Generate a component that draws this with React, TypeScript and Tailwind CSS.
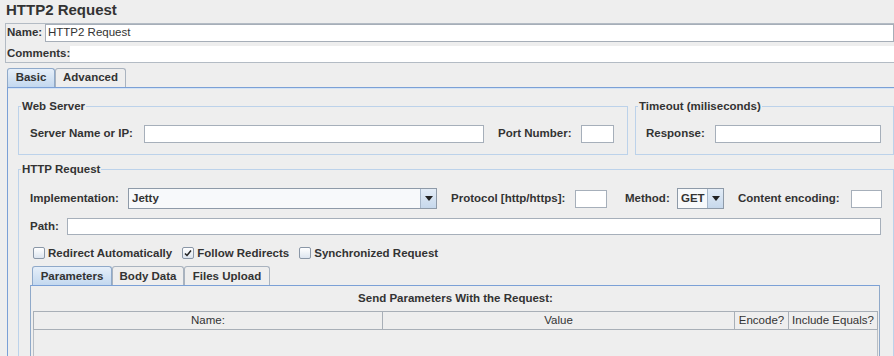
import React from "react";
import clsx from "clsx";

function Tab({ label, active, width }: { label: string; active?: boolean; width: string }) {
  return (
    <div
      className={clsx(
        "h-[19px] flex items-center justify-center font-bold border border-b-0 rounded-t-[3px] leading-none",
        width,
        active
          ? "bg-linear-to-b from-[#e6eff9] to-[#c3d8ef] border-[#8fa9c9]"
          : "bg-[#eeeeee] border-[#a9b3bf]"
      )}
    >
      {label}
    </div>
  );
}

function Field({ width, height = "h-[18px]" }: { width: string; height?: string }) {
  return <div className={clsx("shrink-0 bg-white border border-[#a6afba]", width, height)} />;
}

function Arrow() {
  return (
    <div className="w-[16px] h-full border-l border-[#a6b6c9] bg-linear-to-b from-[#e3ecf6] to-[#c6d8ec] flex items-center justify-center">
      <svg width="8" height="5" viewBox="0 0 8 5">
        <path d="M0 0 H8 L4 5 Z" fill="#222" />
      </svg>
    </div>
  );
}

function Combo({ value, width }: { value: string; width: string }) {
  return (
    <div className={clsx("shrink-0 h-[21px] flex border border-[#8e9aa8] bg-[#f7f9fb]", width)}>
      <div className="flex-1 pl-[3px] flex items-center font-bold">{value}</div>
      <Arrow />
    </div>
  );
}

function Check({ label, checked }: { label: string; checked?: boolean }) {
  return (
    <div className="flex items-center gap-[3px]">
      <div className="w-[12px] h-[12px] border border-[#8a97a7] rounded-[2px] bg-linear-to-b from-white to-[#dce5ef] flex items-center justify-center">
        {checked && (
          <svg width="8" height="8" viewBox="0 0 8 8">
            <path d="M1 4.5 L3 6.5 L7 1.5" stroke="#222" strokeWidth="1.5" fill="none" />
          </svg>
        )}
      </div>
      <span className="font-bold whitespace-nowrap">{label}</span>
    </div>
  );
}

function Group({ title, className, children }: { title: string; className?: string; children: React.ReactNode }) {
  return (
    <fieldset className={clsx("border border-[#bcd2ea] m-0 p-0", className)}>
      <legend className="ml-[2px] px-[1px] font-bold leading-[14px]">{title}</legend>
      {children}
    </fieldset>
  );
}

function Label({ text, width, className }: { text: string; width: string; className?: string }) {
  return <span className={clsx("shrink-0 font-bold whitespace-nowrap", width, className)}>{text}</span>;
}

export default function App() {
  return (
    <div className="w-[894px] h-[356px] overflow-hidden bg-[#eeeeee] text-[#333] text-[11.5px] font-['Liberation_Sans',Arial,sans-serif]">
      <div className="h-[23px] pl-[6px] text-[15px] font-bold leading-[20px]">HTTP2 Request</div>

      <div className="ml-[5px] border-y border-l border-[#b3bbc4] flex flex-col">
        <div className="h-[18px] flex items-center">
          <Label text="Name:" width="w-[39px]" className="pl-[1px]" />
          <div className="flex-1 h-[18px] bg-white border border-[#a6aeb8] pl-[2px] flex items-center">HTTP2 Request</div>
        </div>
        <div className="h-[16px] mt-[4px] flex items-center">
          <Label text="Comments:" width="w-[64px]" className="pl-[1px]" />
          <div className="flex-1 h-full bg-white" />
        </div>
      </div>

      <div className="mt-[5px] pl-[7px] flex">
        <Tab label="Basic" active width="w-[48px]" />
        <Tab label="Advanced" width="w-[71px]" />
      </div>

      <div className="ml-[7px] border-l border-t border-[#7ba0d6] h-[400px]">
        <div className="border-t border-[#d4e3f4] pt-[10px] pl-[10px]">
          <div className="flex gap-[7px]">
            <Group title="Web Server" className="w-[610px]">
              <div className="pt-[12px] pb-[11px] pl-[11px] flex items-center">
                <Label text="Server Name or IP:" width="w-[114px]" />
                <Field width="w-[340px]" />
                <Label text="Port Number:" width="w-[83px]" className="ml-[14px]" />
                <Field width="w-[33px]" />
              </div>
            </Group>
            <Group title="Timeout (miliseconds)" className="w-[259px]">
              <div className="pt-[12px] pb-[11px] pl-[10px] flex items-center">
                <Label text="Response:" width="w-[69px]" />
                <Field width="w-[166px]" />
              </div>
            </Group>
          </div>

          <Group title="HTTP Request" className="mt-[7px] w-[876px] h-[260px]">
            <div className="pt-[12px] pl-[11px]">
              <div className="flex items-center">
                <Label text="Implementation:" width="w-[98px]" />
                <Combo value="Jetty" width="w-[309px]" />
                <Label text="Protocol [http/https]:" width="w-[124px]" className="ml-[14px]" />
                <Field width="w-[32px]" />
                <Label text="Method:" width="w-[52px]" className="ml-[18px]" />
                <Combo value="GET" width="w-[47px]" />
                <Label text="Content encoding:" width="w-[113px]" className="ml-[14px]" />
                <Field width="w-[31px]" />
              </div>

              <div className="mt-[9px] flex items-center">
                <Label text="Path:" width="w-[37px]" />
                <Field width="w-[814px]" height="h-[17px]" />
              </div>

              <div className="mt-[10px] h-[16px] pl-[3px] flex items-center gap-[10px]">
                <Check label="Redirect Automatically" />
                <Check label="Follow Redirects" checked />
                <Check label="Synchronized Request" />
              </div>

              <div className="mt-[5px] pl-[2px] flex">
                <Tab label="Parameters" active width="w-[80px]" />
                <Tab label="Body Data" width="w-[72px]" />
                <Tab label="Files Upload" width="w-[86px]" />
              </div>
              <div className="w-[850px] h-[100px] border border-[#8fa9c9] border-t-[#7ba0d6] pl-[2px] pr-[1px]">
                <div className="h-[25px] flex items-center justify-center font-bold">Send Parameters With the Request:</div>
                <div className="flex h-[19px] text-[#333]">
                  <div className="w-[350px] border border-[#a8afb7] flex items-center justify-center">Name:</div>
                  <div className="w-[352px] border-y border-r border-[#a8afb7] flex items-center justify-center">Value</div>
                  <div className="w-[54px] border-y border-r border-[#a8afb7] flex items-center justify-center">Encode?</div>
                  <div className="w-[89px] border-y border-r border-[#a8afb7] flex items-center justify-center">Include Equals?</div>
                </div>
                <div className="w-[845px] h-[60px] border-x border-[#b8bec5]" />
              </div>
            </div>
          </Group>
        </div>
      </div>
    </div>
  );
}
